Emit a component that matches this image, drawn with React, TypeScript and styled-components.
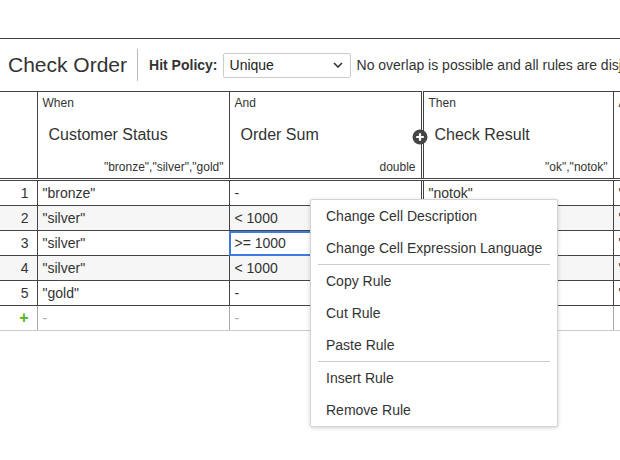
import * as React from 'react';
import styled, { createGlobalStyle } from 'styled-components';

const GlobalStyle = createGlobalStyle`
  html, body {
    margin: 0;
    padding: 0;
    background: #fff;
    overflow: hidden;
  }
  body {
    font-family: "Liberation Sans", Arial, sans-serif;
    color: #333;
  }
`;

const Page = styled.div`
  position: relative;
  width: 620px;
  height: 460px;
  overflow: hidden;
`;

const Toolbar = styled.div`
  display: flex;
  align-items: center;
  margin-top: 38px;
  height: 52px;
  border-top: 1px solid #444;
  padding-left: 8px;
  white-space: nowrap;

  & > * {
    flex-shrink: 0;
  }
`;

const Title = styled.div`
  font-size: 21px;
  color: #333;
`;

const Divider = styled.div`
  width: 1px;
  height: 32px;
  background: #bbb;
  margin: 0 11px 0 10px;
`;

const PolicyLabel = styled.span`
  font-size: 14px;
  font-weight: bold;
  margin-right: 5px;
`;

const SelectBox = styled.div`
  display: flex;
  align-items: center;
  justify-content: space-between;
  box-sizing: border-box;
  width: 128px;
  height: 25px;
  border: 1px solid #ccc;
  border-radius: 2px;
  padding: 0 7px 0 6px;
  font-size: 14px;
  color: #222;
`;

const PolicyHint = styled.span`
  font-size: 14px;
  margin-left: 6px;
`;

const Table = styled.table`
  border-collapse: collapse;
  table-layout: fixed;
  width: 820px;
`;

interface CellProps {
  $first?: boolean;
  $output?: boolean;
}

const HeadCell = styled.th<CellProps>`
  position: relative;
  height: 86px;
  padding: 0;
  vertical-align: top;
  text-align: left;
  font-weight: normal;
  border-top: 1px solid #444;
  border-bottom: 3px double #444;
  border-left: ${(p) =>
    p.$first ? 'none' : p.$output ? '3px double #444' : '1px solid #444'};
  border-right: 1px solid #444;
`;

const HeadInner = styled.div`
  display: flex;
  flex-direction: column;
  height: 86px;
  box-sizing: border-box;
  padding: 4px 5px;
`;

const Kind = styled.div`
  font-size: 12px;
  line-height: 14px;
  color: #333;
`;

const ClauseName = styled.div`
  font-size: 16px;
  line-height: 20px;
  margin: 15px 0 0 6px;
  color: #333;
`;

const TypeRef = styled.div`
  font-size: 12px;
  line-height: 14px;
  margin-top: auto;
  text-align: right;
  color: #333;
`;

const AddColumn = styled.span`
  position: absolute;
  left: -12px;
  top: 37px;
  width: 16px;
  height: 16px;
  display: flex;
`;

const Row = styled.tr<{ $striped?: boolean }>`
  background: ${(p) => (p.$striped ? '#f6f6f6' : '#fff')};
`;

interface BodyCellProps extends CellProps {
  $selected?: boolean;
  $index?: boolean;
  $adder?: boolean;
}

const Cell = styled.td<BodyCellProps>`
  height: 24px;
  padding: 0 5px;
  font-size: 14px;
  white-space: nowrap;
  overflow: hidden;
  color: ${(p) => (p.$adder ? '#aaa' : '#333')};
  text-align: ${(p) => (p.$index ? 'right' : 'left')};
  padding-right: ${(p) => (p.$index ? '8px' : '5px')};
  border-top: 1px solid #444;
  border-bottom: 1px solid ${(p) => (p.$adder ? '#ccc' : '#444')};
  border-left: ${(p) =>
    p.$first
      ? 'none'
      : p.$output
      ? `3px double ${p.$adder ? '#aaa' : '#444'}`
      : `1px solid ${p.$adder ? '#aaa' : '#444'}`};
  border-right: 1px solid ${(p) => (p.$adder ? '#aaa' : '#444')};
  outline: ${(p) => (p.$selected ? '2px solid #3d7be0' : 'none')};
  outline-offset: -2px;
`;

const Plus = styled.span`
  color: #52b415;
  font-size: 16px;
  font-weight: bold;
`;

const Menu = styled.div`
  position: absolute;
  left: 310px;
  top: 199px;
  width: 248px;
  box-sizing: border-box;
  background: #fff;
  border: 1px solid #d4d4d4;
  border-radius: 2px;
  box-shadow: 0 1px 4px rgba(0, 0, 0, 0.18);
`;

const MenuItem = styled.div`
  height: 32px;
  line-height: 32px;
  padding: 0 15px;
  font-size: 14px;
  color: #333;
  white-space: nowrap;
`;

const MenuSeparator = styled.div`
  height: 1px;
  margin: 0 7px;
  background: #ccc;
`;

const rules = [
  { status: '"bronze"', sum: '-', result: '"notok"', reason: '"' },
  { status: '"silver"', sum: '< 1000', result: '"ok"', reason: '"' },
  { status: '"silver"', sum: '>= 1000', result: '"notok"', reason: '"' },
  { status: '"silver"', sum: '< 1000', result: '"ok"', reason: '"' },
  { status: '"gold"', sum: '-', result: '"ok"', reason: '"' },
];

const CirclePlus = () => (
  <svg width="16" height="16" viewBox="0 0 16 16">
    <circle cx="8" cy="8" r="7.5" fill="#444" />
    <path d="M8 4.2v7.6M4.2 8h7.6" stroke="#fff" strokeWidth="2.2" />
  </svg>
);

const Chevron = () => (
  <svg width="10" height="6" viewBox="0 0 10 6">
    <path d="M1 1l4 4 4-4" fill="none" stroke="#333" strokeWidth="1.6" />
  </svg>
);

export default function App() {
  return (
    <Page>
      <GlobalStyle />
      <Toolbar>
        <Title>Check Order</Title>
        <Divider />
        <PolicyLabel>Hit Policy:</PolicyLabel>
        <SelectBox>
          Unique
          <Chevron />
        </SelectBox>
        <PolicyHint>No overlap is possible and all rules are disjoint.</PolicyHint>
      </Toolbar>

      <Table>
        <colgroup>
          <col style={{ width: 37 }} />
          <col style={{ width: 192 }} />
          <col style={{ width: 193 }} />
          <col style={{ width: 191 }} />
          <col style={{ width: 207 }} />
        </colgroup>
        <thead>
          <tr>
            <HeadCell $first />
            <HeadCell>
              <HeadInner>
                <Kind>When</Kind>
                <ClauseName>Customer Status</ClauseName>
                <TypeRef>"bronze","silver","gold"</TypeRef>
              </HeadInner>
            </HeadCell>
            <HeadCell>
              <HeadInner>
                <Kind>And</Kind>
                <ClauseName>Order Sum</ClauseName>
                <TypeRef>double</TypeRef>
              </HeadInner>
            </HeadCell>
            <HeadCell $output>
              <AddColumn>
                <CirclePlus />
              </AddColumn>
              <HeadInner>
                <Kind>Then</Kind>
                <ClauseName>Check Result</ClauseName>
                <TypeRef>"ok","notok"</TypeRef>
              </HeadInner>
            </HeadCell>
            <HeadCell>
              <HeadInner>
                <Kind>And</Kind>
                <ClauseName>Reason</ClauseName>
                <TypeRef>string</TypeRef>
              </HeadInner>
            </HeadCell>
          </tr>
        </thead>
        <tbody>
          {rules.map((rule, i) => (
            <Row key={i} $striped={i % 2 === 1}>
              <Cell $first $index>
                {i + 1}
              </Cell>
              <Cell>{rule.status}</Cell>
              <Cell $selected={i === 2}>{rule.sum}</Cell>
              <Cell $output>{rule.result}</Cell>
              <Cell>{rule.reason}</Cell>
            </Row>
          ))}
          <Row>
            <Cell $first $index $adder>
              <Plus>+</Plus>
            </Cell>
            <Cell $adder>-</Cell>
            <Cell $adder>-</Cell>
            <Cell $adder $output />
            <Cell $adder />
          </Row>
        </tbody>
      </Table>

      <Menu>
        <MenuItem>Change Cell Description</MenuItem>
        <MenuItem>Change Cell Expression Language</MenuItem>
        <MenuSeparator />
        <MenuItem>Copy Rule</MenuItem>
        <MenuItem>Cut Rule</MenuItem>
        <MenuItem>Paste Rule</MenuItem>
        <MenuSeparator />
        <MenuItem>Insert Rule</MenuItem>
        <MenuItem>Remove Rule</MenuItem>
      </Menu>
    </Page>
  );
}
